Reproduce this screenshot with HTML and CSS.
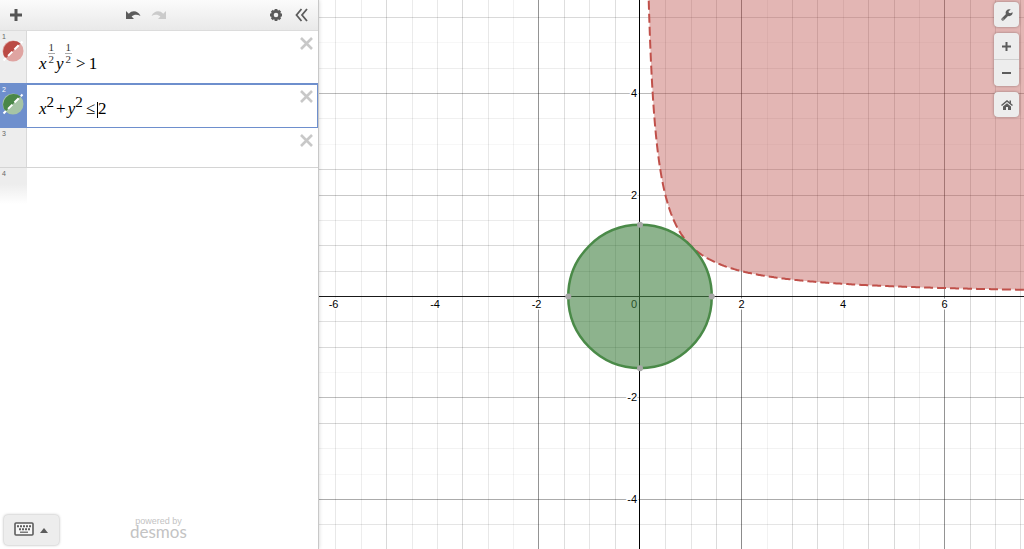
FILE: index.html
```html
<!DOCTYPE html>
<html lang="en">
  <head>
    <meta charset="UTF-8" />
    <meta name="viewport" content="width=device-width, initial-scale=1.0" />
    <title>Desmos | Graphing Calculator</title>
    <link rel="stylesheet" href="styles.css" />
  </head>
  <body>
    <div class="calculator">
      <div class="panel">
        <div class="topbar">
          <button class="tool" aria-label="Add item">
            <svg width="14" height="14" viewBox="0 0 14 14">
              <path d="M7 1v12M1 7h12" stroke="#555" stroke-width="3" />
            </svg>
          </button>
          <div class="history">
            <button class="tool" aria-label="Undo">
              <svg width="16" height="12" viewBox="0 0 16 12">
                <path d="M1 2v8h8L6.600 7.600C9 5.300 12 5 15.500 7C13 1.500 7 1 3.800 4.800z" fill="#5c5c5c" />
              </svg>
            </button>
            <button class="tool" aria-label="Redo" disabled>
              <svg width="16" height="12" viewBox="0 0 16 12">
                <path d="M15 2v8H7l2.400-2.400C7 5.300 4 5 0.500 7C3 1.500 9 1 12.200 4.800z" fill="#cbcbcb" />
              </svg>
            </button>
          </div>
          <div class="settings">
            <button class="tool" aria-label="Edit list">
              <svg width="14" height="14" viewBox="0 0 14 14">
                <circle cx="7" cy="7" r="3.700" fill="none" stroke="#5c5c5c" stroke-width="2.800" />
                <path
                  d="M7 1v2M7 11v2M1 7h2M11 7h2M2.800 2.800l1.400 1.400M9.800 9.800l1.400 1.400M11.200 2.800L9.800 4.200M4.200 9.800l-1.400 1.400"
                  stroke="#5c5c5c"
                  stroke-width="2.800"
                />
              </svg>
            </button>
            <button class="tool" aria-label="Hide list">
              <svg width="14" height="14" viewBox="0 0 14 14">
                <path d="M6.500 1L1.500 7l5 6M12 1L7 7l5 6" fill="none" stroke="#5c5c5c" stroke-width="1.800" />
              </svg>
            </button>
          </div>
        </div>

        <div class="expression expression-tall">
          <div class="gutter">
            <span class="number">1</span>
            <button class="color" aria-label="Hide expression 1">
              <svg width="22" height="22" viewBox="0 0 22 22">
                <circle cx="11" cy="11" r="10.500" fill="#dfa4a1" />
                <path d="M3.600 18.400A10.500 10.500 0 0 1 18.400 3.600z" fill="#bb4a44" />
                <path d="M1.500 20.500L20.500 1.500" stroke="#fff" stroke-width="2" stroke-dasharray="3.500 3 6 3 6 3" />
              </svg>
            </button>
          </div>
          <div class="math" role="textbox" tabindex="0" aria-label="Expression 1">
            <i>x</i><span class="frac"><span>1</span><span>2</span></span
            ><i>y</i><span class="frac"><span>1</span><span>2</span></span
            ><span class="op">&gt;</span><span>1</span>
          </div>
          <button class="delete" aria-label="Delete expression 1">
            <svg width="13" height="13" viewBox="0 0 13 13">
              <path d="M1 1l11 11M12 1L1 12" stroke="#c8c8c8" stroke-width="2.600" />
            </svg>
          </button>
        </div>

        <div class="expression selected">
          <div class="gutter">
            <span class="number">2</span>
            <button class="color" aria-label="Hide expression 2">
              <svg width="22" height="22" viewBox="0 0 22 22">
                <circle cx="11" cy="11" r="10.500" fill="#a6c4a5" />
                <path d="M3.600 18.400A10.500 10.500 0 0 1 18.400 3.600z" fill="#4a8748" />
                <path d="M1.500 20.500L20.500 1.500" stroke="#fff" stroke-width="2" stroke-dasharray="3.500 3 6 3 6 3" />
              </svg>
            </button>
          </div>
          <div class="math" role="textbox" tabindex="0" aria-label="Expression 2">
            <i>x</i><span class="power">2</span><span class="op plus">+</span
            ><i>y</i><span class="power">2</span><span class="op">≤</span
            ><span class="cursor"></span><span>2</span>
          </div>
          <button class="delete" aria-label="Delete expression 2">
            <svg width="13" height="13" viewBox="0 0 13 13">
              <path d="M1 1l11 11M12 1L1 12" stroke="#c8c8c8" stroke-width="2.600" />
            </svg>
          </button>
        </div>

        <div class="expression">
          <div class="gutter"><span class="number">3</span></div>
          <input class="field" type="text" aria-label="Expression 3" />
          <button class="delete" aria-label="Delete expression 3">
            <svg width="13" height="13" viewBox="0 0 13 13">
              <path d="M1 1l11 11M12 1L1 12" stroke="#c8c8c8" stroke-width="2.600" />
            </svg>
          </button>
        </div>

        <div class="expression next">
          <div class="gutter"><span class="number">4</span></div>
          <input class="field" type="text" aria-label="Expression 4" />
        </div>

        <div class="bottom">
          <button class="keypad" aria-label="Show keypad">
            <svg width="20" height="14" viewBox="0 0 20 14">
              <rect x="1" y="1" width="18" height="12" rx="1" fill="#f7f7f7" stroke="#5c5c5c" stroke-width="1.600" />
              <path d="M3 4.200h14" stroke="#5c5c5c" stroke-width="2" stroke-dasharray="2 1" />
              <path d="M5 7.200h11" stroke="#5c5c5c" stroke-width="2" stroke-dasharray="2 1" />
              <path d="M6 10.200h8" stroke="#5c5c5c" stroke-width="1.200" />
            </svg>
            <svg width="8" height="5" viewBox="0 0 8 5">
              <path d="M4 0l4 5H0z" fill="#5c5c5c" />
            </svg>
          </button>
          <div class="branding">
            <span class="powered">powered by</span>
            <span class="brand">desmos</span>
          </div>
        </div>
      </div>

      <div class="graph">
        <svg class="plot" id="plot"></svg>
        <div class="controls">
          <button class="control" aria-label="Graph settings">
            <svg width="12" height="12" viewBox="0 0 12 12">
              <path
                d="M1.800 10.200L7 5"
                stroke="#5c5c5c"
                stroke-width="2.800"
                stroke-linecap="round"
              />
              <path
                d="M9.800 0.600A3.500 3.500 0 1 0 11.600 3.200L9.300 4.300L7.700 3.800L7.600 2.200z"
                fill="#5c5c5c"
              />
              <circle cx="2" cy="10" r="0.600" fill="#ededed" />
            </svg>
          </button>
          <div class="zoom">
            <button class="control" aria-label="Zoom in">
              <svg width="9" height="9" viewBox="0 0 9 9">
                <path d="M4.500 0v9M0 4.500h9" stroke="#5c5c5c" stroke-width="2" />
              </svg>
            </button>
            <button class="control" aria-label="Zoom out">
              <svg width="9" height="9" viewBox="0 0 9 9">
                <path d="M0 4h9" stroke="#5c5c5c" stroke-width="2" />
              </svg>
            </button>
          </div>
          <button class="control" aria-label="Default viewport">
            <svg width="12" height="10" viewBox="0 0 12 10">
              <path d="M0.500 5.500L6 1l5.500 4.500" fill="none" stroke="#5c5c5c" stroke-width="1.500" />
              <path d="M8.500 0.500h1.500v3H8.500z" fill="#5c5c5c" />
              <path d="M2 6.500l4-3.300L10 6.500V10H7V7H5v3H2z" fill="#5c5c5c" />
            </svg>
          </button>
        </div>
      </div>
    </div>
    <script src="script.js"></script>
  </body>
</html>
```

FILE: styles.css
```css
* {
  margin: 0;
  padding: 0;
  box-sizing: border-box;
}
body {
  background: #fff;
  color: #000;
  font-family: "Liberation Sans", Arial, sans-serif;
}
button {
  border: 0;
  background: none;
  cursor: pointer;
}
svg {
  display: block;
}
.calculator {
  display: flex;
  height: 100vh;
  overflow: hidden;
}

/* expression list */
.panel {
  display: flex;
  flex-direction: column;
  flex: 0 0 319px;
  border-right: 1px solid #c8c8c8;
  box-shadow: 0 0 4px rgba(0, 0, 0, 0.18);
  z-index: 1;
  background: #fff;
}
.topbar {
  display: flex;
  align-items: center;
  justify-content: space-between;
  height: 31px;
  padding: 0 9px;
  background: linear-gradient(#fbfbfb, #e9e9e9);
  border-bottom: 1px solid #dcdcdc;
}
.history,
.settings {
  display: flex;
  align-items: center;
  gap: 10px;
}
.settings {
  gap: 12px;
}
.expression {
  display: flex;
  height: 40px;
  border-bottom: 1px solid #d4d4d4;
}
.expression-tall {
  height: 52px;
  border-bottom: 0;
}
.gutter {
  display: flex;
  flex-direction: column;
  flex: 0 0 27px;
  padding: 1px 2px;
  background: #ededed;
  border-right: 1px solid #d9d9d9;
}
.number {
  padding-top: 1px;
  font-size: 7px;
  line-height: 7px;
  color: #666;
}
.math {
  display: flex;
  flex: 1;
  align-items: baseline;
  padding: 23px 12px 0;
  font-family: "Liberation Serif", "Times New Roman", serif;
  font-size: 17px;
  line-height: 20px;
}
.frac {
  display: flex;
  flex-direction: column;
  align-self: flex-start;
  margin: -12px 1px 0;
  font-size: 11px;
  line-height: 11px;
  text-align: center;
  color: #333;
}
.frac span {
  padding: 0 1px;
}
.frac span + span {
  border-top: 1px solid #aaa;
}
.power {
  position: relative;
  top: -7px;
  font-size: 15px;
}
.op {
  margin: 0 3px;
}
.plus {
  margin: 0 2px;
}
.cursor {
  align-self: flex-start;
  width: 1px;
  height: 16px;
  margin: 3px 0 0 -1px;
  background: #000;
}
.delete {
  align-self: flex-start;
  padding: 6px 5px;
}
.selected {
  height: 45px;
  border-bottom: 0;
  background: #fff;
}
.selected .gutter {
  background: #6e8fcd;
  border-right-color: #6e8fcd;
}
.selected .number {
  padding-top: 2px;
  color: #fff;
}
.selected .math {
  padding-top: 14px;
  border: solid #6e8fcd;
  border-width: 2px 0 1px;
  outline: 0;
}
.selected .delete {
  align-self: stretch;
  display: flex;
  border: solid #6e8fcd;
  border-width: 2px 1px 1px 0;
  padding: 5px 4px 0 5px;
}
.field {
  flex: 1;
  min-width: 0;
  padding: 0 12px;
  border: 0;
  outline: 0;
  font-family: "Liberation Serif", "Times New Roman", serif;
  font-size: 17px;
}
.next {
  border-bottom: 0;
}
.next .gutter {
  background: linear-gradient(#ededed 40%, #fff 90%);
  border-right: 0;
}
.bottom {
  display: flex;
  align-items: center;
  gap: 71px;
  margin-top: auto;
  padding: 0 4px 4px;
}
.keypad {
  display: flex;
  align-items: center;
  justify-content: center;
  gap: 6px;
  width: 55px;
  height: 30px;
  padding: 0 1px 2px 0;
  background: #ededed;
  border-radius: 4px;
  box-shadow: 0 0 3px rgba(0, 0, 0, 0.35);
}
.keypad svg + svg {
  margin-top: 2px;
}
.branding {
  display: flex;
  flex-direction: column;
  align-items: center;
  padding-bottom: 6px;
  color: #c3c3c3;
}
.powered {
  font-size: 9px;
  line-height: 10px;
}
.brand {
  font-family: Lato, sans-serif;
  font-size: 17px;
  line-height: 12px;
}

/* graph paper */
.graph {
  position: relative;
  flex: 1;
  min-width: 0;
}
.plot {
  width: 100%;
  height: 100%;
}
.grid-line {
  stroke: #000;
  shape-rendering: crispEdges;
}
.axis {
  stroke: #000;
  stroke-width: 1px;
  shape-rendering: crispEdges;
}
.label {
  font-size: 11px;
  fill: #000;
  stroke: #fff;
  stroke-width: 3px;
  paint-order: stroke;
}
.region-red {
  fill: #b94843;
  fill-opacity: 0.4;
}
.curve-red {
  fill: none;
  stroke: #c0504a;
  stroke-width: 2px;
  stroke-dasharray: 9 4;
}
.circle-green {
  fill: #418041;
  fill-opacity: 0.6;
  stroke: #4a8a48;
  stroke-width: 2.5px;
}
.point {
  fill: #a8a8a8;
}
.controls {
  position: absolute;
  top: 2px;
  right: 5px;
  display: flex;
  flex-direction: column;
  gap: 6px;
}
.control {
  display: flex;
  align-items: center;
  justify-content: center;
  width: 25px;
  height: 25px;
  background: #ededed;
  border-radius: 4px;
  box-shadow: 0 0 3px rgba(0, 0, 0, 0.35);
}
.zoom {
  border-radius: 4px;
  box-shadow: 0 0 3px rgba(0, 0, 0, 0.35);
}
.zoom .control {
  height: 26px;
  border-radius: 4px 4px 0 0;
  box-shadow: none;
}
.zoom .control + .control {
  height: 27px;
  border-top: 1px solid #d0d0d0;
  border-radius: 0 0 4px 4px;
}
```

FILE: script.js
```js
const plot = document.getElementById("plot");
const unit = 50.74;
const step = unit / 2;

// line strength for each half unit, starting at the given index
const columns = {
  start: -12,
  alpha: [
    0.09, 0.07, 0.15, 0.08, 0.09, 0.15, 0.09, 0.05, 0.42, 0.13, 0.1, 0.13, 0,
    0.11, 0.1, 0.14, 0.45, 0.05, 0.14, 0.14, 0.08, 0.15, 0.15, 0.07, 0.42, 0.15,
    0.12, 0.13,
  ],
};
const rows = {
  start: -9,
  alpha: [
    0.1, 0.33, 0.03, 0.05, 0.16, 0.26, 0.03, 0.15, 0.12, 0, 0.12, 0.15, 0.08,
    0.22, 0.17, 0.03, 0.06, 0.27, 0.07, 0.03, 0.15,
  ],
};

function strength(set, k) {
  const value = set.alpha[k - set.start];
  return value === undefined ? 0.1 : value;
}

function line(x1, y1, x2, y2, cls, alpha) {
  return `<line class="${cls}" x1="${x1}" y1="${y1}" x2="${x2}" y2="${y2}" stroke-opacity="${alpha}" />`;
}

function label(x, y, anchor, value) {
  return `<text class="label" x="${x}" y="${y}" text-anchor="${anchor}">${value}</text>`;
}

function draw() {
  const w = plot.clientWidth;
  const h = plot.clientHeight;
  const cx = Math.round(w / 2 - 32);
  const cy = Math.round(h / 2 + 21);
  let out = "";

  for (let k = -Math.floor(cx / step); k * step < w - cx; k++) {
    if (k === 0) continue;
    const x = Math.floor(cx + 0.4 + k * step) + 0.5;
    out += line(x, 0, x, h, "grid-line", strength(columns, k));
  }
  for (let k = -Math.floor((h - cy) / step); k * step < cy; k++) {
    if (k === 0) continue;
    const y = Math.floor(cy + 0.5 - k * step) + 0.5;
    out += line(0, y, w, y, "grid-line", strength(rows, k));
  }

  out += line(0, cy + 0.5, w, cy + 0.5, "axis", 0.9);
  out += line(cx - 0.5, 0, cx - 0.5, h, "axis", 1);

  for (let n = -6; n <= 6; n += 2) {
    if (n === 0) continue;
    out += label(cx + n * unit - (n < 0 ? 2 : 0), cy + 12, "middle", n);
    if (Math.abs(n) < 6) {
      out += label(cx - 3, cy - n * unit + 4, "end", n);
    }
  }
  out += label(cx - 3, cy + 12, "end", 0);

  // x^(1/2) y^(1/2) > 1, the boundary is y = 1 / x
  let points = [];
  for (let px = 2; px <= w - cx + 4; px++) {
    points.push(`${cx + px},${(cy + 0.5 - (unit * unit) / px).toFixed(1)}`);
  }
  // start close to the top edge, where the curve comes into view
  points = points.filter((p) => Number(p.split(",")[1]) > -60);
  const curve = "M" + points.join("L");
  out += `<path class="region-red" d="${curve}V-60z" />`;
  out += `<path class="curve-red" d="${curve}" />`;

  // x^2 + y^2 <= 2
  const r = Math.SQRT2 * unit;
  out += `<circle class="circle-green" cx="${cx}" cy="${cy + 0.5}" r="${r}" />`;
  [[r, 0], [-r, 0], [0, r], [0, -r]].forEach(([dx, dy]) => {
    out += `<circle class="point" cx="${cx + dx}" cy="${cy + 0.5 + dy}" r="3" />`;
  });

  plot.innerHTML = out;
}

draw();
window.addEventListener("resize", draw);
```
